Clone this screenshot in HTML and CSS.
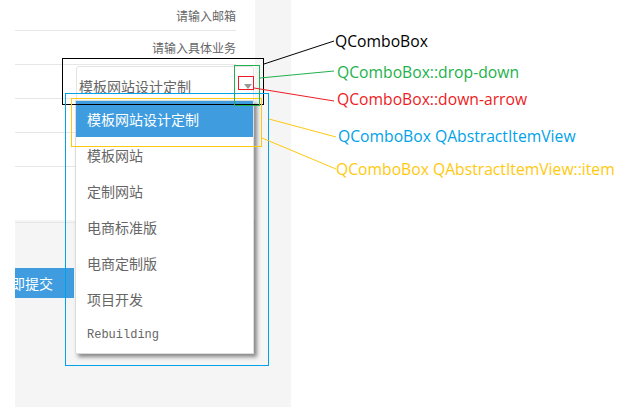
FILE: index.html
```html
<!DOCTYPE html>
<html lang="zh-CN">
<head>
  <meta charset="UTF-8">
  <title>QComboBox 样式说明</title>
  <link rel="stylesheet" href="styles.css">
</head>
<body>
  <!-- 表单截图 -->
  <div class="panel">
    <div class="form">
      <div class="row row-short"><span class="hint">请输入邮箱</span></div>
      <div class="row"><span class="hint">请输入具体业务</span></div>
      <div class="row">
        <div class="combo">
          <span class="combo-text">模板网站设计定制</span>
          <span class="arrow"></span>
        </div>
      </div>
      <div class="row"></div>
      <div class="row"></div>
      <div class="row row-tall"></div>
    </div>
    <div class="submit"><span>立即提交</span></div>
  </div>

  <!-- 下拉列表 -->
  <ul class="popup">
    <li class="active">模板网站设计定制</li>
    <li>模板网站</li>
    <li>定制网站</li>
    <li>电商标准版</li>
    <li>电商定制版</li>
    <li>项目开发</li>
    <li class="latin">Rebuilding</li>
  </ul>

  <!-- 标注 -->
  <svg class="marks" width="630" height="419" viewBox="0 0 630 419">
    <g fill="none" stroke-width="1" shape-rendering="crispEdges">
      <rect x="62.5" y="58.5" width="201" height="46" stroke="#000"/>
      <rect x="65.5" y="93.5" width="203" height="272" stroke="#00a2e8"/>
      <rect x="71.5" y="98.5" width="190" height="48" stroke="#ffc90e"/>
      <rect x="234.5" y="65.5" width="25" height="40" stroke="#22b14c"/>
      <rect x="238.5" y="76.5" width="15" height="13" stroke="#ed1c24"/>
    </g>
    <g stroke-width="1">
      <line x1="264" y1="64" x2="334" y2="41" stroke="#000"/>
      <line x1="260" y1="78" x2="334" y2="71" stroke="#22b14c"/>
      <line x1="254" y1="88" x2="334" y2="101" stroke="#ed1c24"/>
      <line x1="269" y1="119" x2="336" y2="137" stroke="#ffc90e"/>
      <line x1="262" y1="138" x2="336" y2="169" stroke="#ffc90e"/>
    </g>
  </svg>

  <div class="label label-black" style="top: 31px; left: 335px;">QComboBox</div>
  <div class="label label-green" style="top: 62px; left: 337px;">QComboBox::drop-down</div>
  <div class="label label-red" style="top: 89px; left: 337px;">QComboBox::down-arrow</div>
  <div class="label label-blue" style="top: 126px; left: 338px;">QComboBox QAbstractItemView</div>
  <div class="label label-yellow" style="top: 159px; left: 336px;">QComboBox QAbstractItemView::item</div>
</body>
</html>
```

FILE: styles.css
```css
body {
  margin: 0;
  width: 630px;
  height: 419px;
  background: #fff;
  position: relative;
  overflow: hidden;
  font-family: "Noto Sans CJK SC", sans-serif;
}

.panel {
  margin-left: 15px;
  width: 276px;
  height: 407px;
  background: #f5f5f5;
  overflow: hidden;
}

.form {
  width: 240px;
  height: 220px;
  background: #fff;
}

.row {
  height: 34px;
  width: 221px;
  box-sizing: border-box;
  border-bottom: 1px solid #e6e6e6;
  display: flex;
  align-items: center;
  justify-content: flex-end;
}

.row-short {
  height: 31px;
}

.row-tall {
  height: 56px;
  width: 240px;
}

.hint {
  font-size: 12px;
  color: #666;
}

.combo {
  align-self: flex-start;
  flex-shrink: 0;
  margin-top: 1px;
  margin-left: 60px;
  margin-right: -18px;
  width: 178px;
  height: 40px;
  box-sizing: border-box;
  border: 1px solid #e3e3e3;
  border-radius: 3px;
  background: #fff;
  display: flex;
  align-items: center;
  padding-left: 2px;
}

.combo-text {
  font-size: 14px;
  color: #666;
  margin-top: -1px;
}

.arrow {
  margin-left: auto;
  margin-right: 1px;
  width: 0;
  height: 0;
  border-left: 4px solid transparent;
  border-right: 4px solid transparent;
  border-top: 5px solid #999;
}

.submit {
  margin-top: 48px;
  width: 59px;
  height: 30px;
  background: #3f9ddf;
  display: flex;
  align-items: center;
  justify-content: flex-end;
  padding-right: 21px;
  box-sizing: border-box;
  color: #fff;
  font-size: 14px;
  white-space: nowrap;
}

.popup {
  position: absolute;
  top: 100px;
  left: 75px;
  width: 179px;
  margin: 0;
  padding: 0;
  list-style: none;
  background: #fff;
  border: 1px solid #dcdcdc;
  box-sizing: border-box;
  box-shadow: 3px 3px 4px rgba(0, 0, 0, 0.45);
}

.popup li {
  height: 36px;
  line-height: 36px;
  padding-left: 11px;
  font-size: 14px;
  color: #666;
}

.popup li.active {
  background: #3f9ddf;
  color: #fff;
}

.popup li.latin {
  font-family: "Liberation Mono", monospace;
  font-size: 12px;
}

.marks {
  position: absolute;
  top: 0;
  left: 0;
  pointer-events: none;
}

.label {
  position: absolute;
  font-family: "Open Sans", sans-serif;
  font-size: 15.7px;
  line-height: 20px;
  white-space: nowrap;
}

.label-black { color: #000; }
.label-green { color: #22b14c; }
.label-red { color: #ed1c24; }
.label-blue { color: #00a2e8; }
.label-yellow { color: #ffc90e; }
```
